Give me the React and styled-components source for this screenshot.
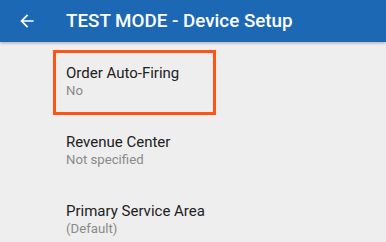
import React from "react";
import styled, { createGlobalStyle } from "styled-components";

const Global = createGlobalStyle`
  html, body { margin: 0; padding: 0; background: #eeeeee; }
  body { font-family: Roboto, "Noto Sans", sans-serif; overflow: hidden; }
`;

const Page = styled.div`
  width: 386px;
  height: 242px;
  background: #eeeeee;
  overflow: hidden;
`;

const AppBar = styled.header`
  height: 42px;
  background: #1d68b4;
  display: flex;
  align-items: center;
  box-shadow: 0 1px 3px rgba(0, 0, 0, 0.3);
  position: relative;
  z-index: 1;
`;

const BackButton = styled.div`
  width: 66px;
  display: flex;
  align-items: center;
  padding-left: 17px;
  box-sizing: border-box;
  color: #fff;
`;

const Title = styled.h1`
  margin: 0;
  color: #ffffff;
  font-size: 18.8px;
  font-weight: 500;
  letter-spacing: 0;
`;

const List = styled.div`
  padding-top: 5px;
`;

const Row = styled.div`
  position: relative;
  height: 69px;
  padding-left: 66px;
  display: flex;
  flex-direction: column;
  justify-content: center;
`;

const Primary = styled.div`
  font-size: 15px;
  line-height: 18px;
  color: #212121;
`;

const Secondary = styled.div`
  font-size: 13.2px;
  line-height: 18px;
  color: #8a8a8a;
`;

const Highlight = styled.div`
  position: absolute;
  left: 53px;
  top: 3px;
  width: 163px;
  height: 65px;
  box-sizing: border-box;
  border: 3.5px solid #ff5416;
  pointer-events: none;
`;

const items = [
  { title: "Order Auto-Firing", value: "No", highlight: true },
  { title: "Revenue Center", value: "Not specified" },
  { title: "Primary Service Area", value: "(Default)" },
];

export default function App() {
  return (
    <Page>
      <Global />
      <AppBar>
        <BackButton>
          <svg width="20" height="20" viewBox="0 0 24 24" fill="#fff">
            <path d="M20 11H7.83l5.59-5.59L12 4l-8 8 8 8 1.41-1.41L7.83 13H20v-2z" />
          </svg>
        </BackButton>
        <Title>TEST MODE - Device Setup</Title>
      </AppBar>
      <List>
        {items.map((it) => (
          <Row key={it.title}>
            {it.highlight && <Highlight />}
            <Primary>{it.title}</Primary>
            <Secondary>{it.value}</Secondary>
          </Row>
        ))}
      </List>
    </Page>
  );
}
